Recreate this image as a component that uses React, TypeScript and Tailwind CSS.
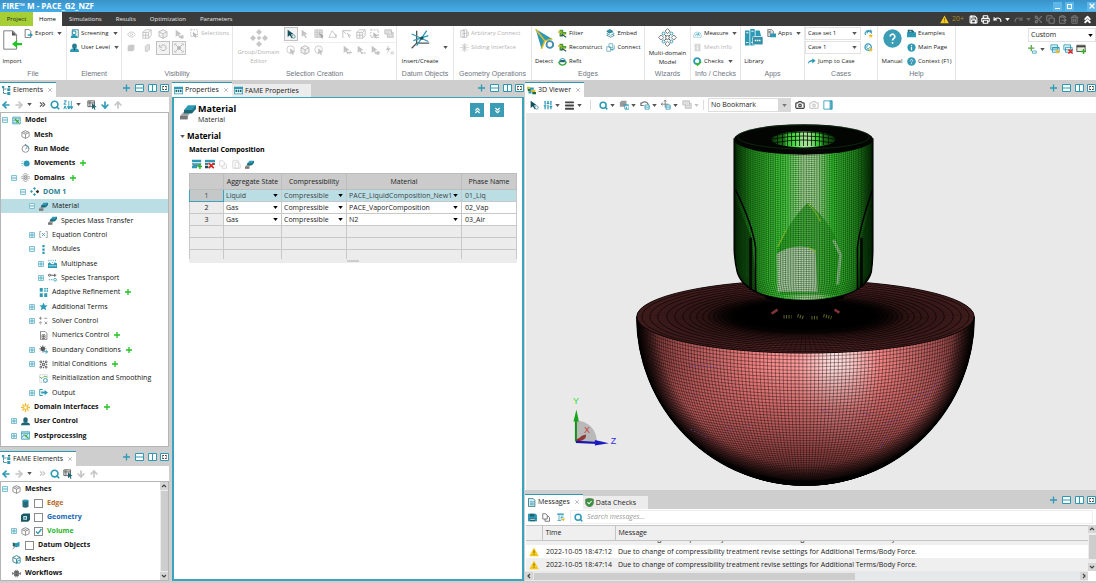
import type { ReactNode } from "react";
import {
  ArrowDown,
  ArrowLeft,
  ArrowRight,
  ArrowUp,
  Camera,
  ChevronsDown,
  ChevronsRight,
  ChevronsUp,
  ClipboardPaste,
  Copy,
  Eye,
  Menu,
  Printer,
  Redo,
  Save,
  Scissors,
  Search,
  SlidersVertical,
  Trash2,
  Undo,
  X,
} from "lucide-react";

const TEAL = "#2d9ab5";
const DARK = "#1f6573";
const OFF = "#c3c3c3";

const pointer = "M2 1l7 5-3 .5 2 4-1.500.7-1.800-3.800L2 9.500z";
const cube = "M6 .8l4.800 2.400v5.600L6 11.200 1.200 8.800V3.200zM1.200 3.200L6 5.600l4.800-2.400M6 5.600v5.600";

const glyphs: Record<string, ReactNode> = {
  cube: (
    <g fill="none" stroke="#777">
      <path d={cube} />
      <path d="M3.500 2l5 2.500M8.500 2l-5 2.500" strokeWidth=".5" />
    </g>
  ),
  cubeTeal: (
    <g fill="none" stroke="#2f7f8c" strokeWidth="1.200">
      <path d={cube} />
      <circle cx="9" cy="9" r="2" fill="#fff" stroke={TEAL} />
    </g>
  ),
  cubeOff: <path d={cube} fill="#efefef" stroke="#b5b5b5" />,
  boxOff: (
    <path d="M1 4h7v7H1zM1 4l3-3h7v7l-3 3M8 4l3-3M4.500 4v7M1 7.500h7" fill="none" stroke="#bbb" />
  ),
  solidOff: <path d="M2 4l2-2h6v6l-2 2H2z" fill="#c9c9c9" />,
  slabOff: <path d="M4 4l2-2h3v6L7 10H4z" fill="#e0e0e0" stroke="#c5c5c5" />,
  model: (
    <>
      <path d="M1 1.500h10v9H1z" fill="#d9f0ef" stroke={TEAL} />
      <path d="M1 3.500h10M1 6h5M1 8.500h5" stroke={TEAL} strokeWidth=".7" />
      <path d="M4 4l5 5M9 5l-3 4" stroke="#37a02c" strokeWidth="1.600" />
    </>
  ),
  clock: (
    <>
      <circle cx="6" cy="6.500" r="4.600" fill="#fff" stroke="#777" />
      <path d="M6 6.500l2.500-2M5 1h2" stroke="#333" />
      <path d="M6 2a4.500 4.500 0 0 1 4.500 4.500" fill="none" stroke={TEAL} strokeWidth="1.200" />
    </>
  ),
  move: (
    <>
      <circle cx="7.500" cy="6" r="4" fill={TEAL} />
      <path d="M0 6h3M1 3h2M1 9h2" stroke="#63b8cc" />
    </>
  ),
  domains: (
    <g fill="none" stroke="#777" strokeWidth=".9">
      <path d="M6 0l2 2-2 2-2-2zM6 8l2 2-2 2-2-2zM2 4l2 2-2 2-2-2zM10 4l2 2-2 2-2-2z" />
      <circle cx="6" cy="6" r="2" />
      <path d="M2 2l8 8M10 2l-8 8" strokeWidth=".5" />
    </g>
  ),
  dom: (
    <>
      <path d="M6 0l2 2-2 2-2-2zM6 8l2 2-2 2-2-2zM2 4l2 2-2 2-2-2z" fill={TEAL} />
      <path d="M10 3.500L12.500 6 10 8.500 7.500 6z" fill="#333" />
    </>
  ),
  material: (
    <>
      <path d="M0 9l3.500-4h5L6 9v2.500H0z" fill="#a3a3a3" />
      <path d="M0 9h5.500v2.500H0z" fill="#777" />
      <path d="M3 4.500L6 1h6v2.500L9 7H3z" fill={TEAL} />
      <path d="M3 4.500h6V7H3z" fill={DARK} />
      <path d="M9 4.500L12 1v2.500L9 7z" fill="#236f80" />
    </>
  ),
  equation: (
    <g fill="none" stroke="#888">
      <path d="M3 2H1v8h2M9 2h2v8H9" />
      <path d="M4 4l4 4M8 4l-4 4" stroke={TEAL} />
    </g>
  ),
  modules: (
    <path d="M4.500 0h3v3h-3zM4.500 4.500h3v3h-3zM4.500 9h3v3h-3z" fill={TEAL} />
  ),
  multiphase: (
    <>
      <path d="M0 6q2-2 4 0t4 0 4 0v6H0z" fill={TEAL} />
      <path d="M1 1v2M4 1v2M7 1v2M10 1v2M2 4v1M6 4v1M9 4v1" stroke={TEAL} />
      <path d="M1 9h10" stroke="#d5eef3" />
    </>
  ),
  transport: (
    <g fill="none" strokeWidth="1.100">
      <circle cx="2" cy="3" r="1.400" stroke="#444" />
      <path d="M3.500 3H11M9 1v4" stroke="#444" />
      <path d="M1 9h6" stroke={TEAL} strokeDasharray="2 1" />
      <circle cx="9.500" cy="9" r="1.800" stroke={TEAL} />
    </g>
  ),
  adaptive: (
    <>
      <path d="M1 0h4v5H1zM1 7h4v5H1z" fill={TEAL} />
      <path d="M7 0h2v2H7zM10 0h2v2h-2zM7 3h2v2H7zM10 3h2v2h-2zM7 7h4v5H7z" fill={TEAL} />
    </>
  ),
  star: <path d="M6 .5l1.600 3.700 4 .3-3 2.600 1 4L6 9l-3.600 2.100 1-4-3-2.600 4-.3z" fill={TEAL} />,
  solver: (
    <path
      d="M0 3h4M2 1v4M7 3h4M0 9h4M1.500 7.500h1M1.500 10.800h1M7.500 7.500l3.500 3.500M11 7.500L7.500 11"
      stroke="#777"
      fill="none"
    />
  ),
  numerics: (
    <g fill="none" stroke="#666">
      <path d="M2 .5h6l2.500 2.500v8.500H2z" />
      <path d="M4 5h4v5H4zM4 7.500h4M6 5v5" />
    </g>
  ),
  boundary: (
    <>
      <circle cx="5" cy="5" r="3" fill="#444" />
      <path d="M5 0v10M0 5h10M1.500 1.500l7 7M8.500 1.500l-7 7" stroke="#666" strokeWidth=".8" />
      <path d="M5 9h6M9 7l2.500 2L9 11.500" stroke={TEAL} strokeWidth="1.300" fill="none" />
    </>
  ),
  initial: (
    <g fill="none" stroke="#333">
      <circle cx="2.500" cy="2.500" r="1.300" />
      <circle cx="9.500" cy="2.500" r="1.300" />
      <circle cx="6" cy="6" r="1.300" />
      <circle cx="2.500" cy="9.500" r="1.300" />
      <circle cx="9.500" cy="9.500" r="1.300" />
      <path d="M6 1v2M6 9v2M1 6h2M9 6h2M3.500 3.500l1.500 1.500M8.500 3.500L7 5M3.500 8.500L5 7M8.500 8.500L7 7" />
    </g>
  ),
  smoothing: (
    <g fill="none">
      <path d="M1 1h10v10H1z" stroke="#bbb" strokeDasharray="2 1" />
      <path d="M1 4l3 2 3-3 4 1" stroke="#37a02c" />
      <circle cx="8.500" cy="8.500" r="2.500" stroke={TEAL} strokeWidth="1.200" />
    </g>
  ),
  output: (
    <>
      <path d="M5 2H1v8h4" fill="none" stroke={TEAL} strokeWidth="1.300" />
      <path d="M3 4.800h4.500V2.500L12 6 7.500 9.500V7.200H3z" fill={TEAL} />
    </>
  ),
  sun: (
    <>
      <path d="M6 0v12M0 6h12M1.800 1.800l8.400 8.400M10.200 1.800l-8.400 8.400" stroke="#efb929" strokeWidth="1.700" />
      <circle cx="6" cy="6" r="2.300" fill="#fff" stroke="#efb929" />
    </>
  ),
  user: (
    <>
      <ellipse cx="6" cy="4" rx="3" ry="3.600" fill="#216474" />
      <path d="M0 11c0-3 2-4 6-4s6 1 6 4z" fill="#216474" />
    </>
  ),
  people: (
    <>
      <ellipse cx="6" cy="4" rx="3.200" ry="3.500" fill="#247f94" />
      <path d="M0 12c0-4 2-5 6-5s6 1 6 5z" fill={TEAL} />
      <path d="M5 7l1 4 1-4z" fill="#164d58" />
    </>
  ),
  screening: (
    <>
      <path d="M3 1h8v10H3z" fill="#fff" stroke={DARK} />
      <circle cx="5.500" cy="5" r="2.500" fill="#fff" stroke={TEAL} strokeWidth="1.400" />
      <path d="M1 12c0-3 1-4 4.500-4S10 9 10 12z" fill={TEAL} />
    </>
  ),
  post: (
    <>
      <path d="M.5 1h11v10H.5z" fill="#cdeaf0" stroke={TEAL} />
      <path d="M.5 3h11M1 9l3-4 2 2 3-3" stroke={TEAL} fill="none" />
      <path d="M5 5l5 5" stroke="#4cae3c" strokeWidth="1.600" />
    </>
  ),
  edge: (
    <>
      <path d="M2 2h8v8c0 2-8 2-8 0z" fill="#27606c" />
      <ellipse cx="6" cy="2.200" rx="4" ry="1.500" fill={TEAL} />
      <path d="M4 4v7M8 4v7" stroke={TEAL} strokeWidth=".7" />
    </>
  ),
  geometry: (
    <>
      <path d="M0 3l3-2.500h9V9l-2.500 2.500H0z" fill="#1c5866" />
      <path d="M3 4h5v5H3z" fill="#bfe2ea" />
      <path d="M4.500 5.500h2v2h-2z" fill="#1c5866" />
    </>
  ),
  datum: (
    <>
      <path d="M1 2l4 1v5L1 7z" fill={DARK} />
      <path d="M5 3l5-2v6L5 8.500z" fill={TEAL} />
      <path d="M1 11l3-4" stroke="#8a8a8a" strokeWidth="1.300" />
    </>
  ),
  workflow: (
    <>
      <path d="M3 2.500h6v7H3z" fill="#555" />
      <path d="M0 6h12M1 4v4M11 4v4M5 1v10M7 1v10" stroke="#777" strokeWidth="1.200" />
    </>
  ),
  tree: (
    <>
      <path d="M2 1v9h4M2 4h4" stroke={DARK} fill="none" strokeDasharray="1.500 .8" strokeWidth="1.300" />
      <path d="M0 0h3v3H0zM7 3h4v3.500H7zM7 8h4v4H7z" fill={TEAL} />
      <path d="M8 0h3v2H8z" fill={DARK} />
    </>
  ),
  props: (
    <>
      <path d="M0 1h12v10H0z" fill={TEAL} />
      <path d="M1 4h10v6H1z" fill="#e6f5f8" />
      <path d="M2 5h2v3H2zM5 5h2v3H5zM8 5h2v3H8z" fill={DARK} />
    </>
  ),
  viewer: (
    <>
      <path d="M0 1h4v3H0zM5 5h6v3H5z" fill="#d6bf2d" />
      <path d="M1 4h4v3H1zM7 8h5v3H7z" fill="#1e6d3f" />
      <path d="M4 2h5v3H4zM2 7h4v3H2z" fill={TEAL} />
    </>
  ),
  doc: (
    <g stroke={DARK} fill="#d3ebf1">
      <path d="M2 .5h6L10.500 3v8.500H2z" />
      <path d="M4 5h5M4 7h5M4 9h5" stroke={TEAL} />
    </g>
  ),
  shield: (
    <>
      <path d="M6 0l5.500 1.500v4C11.500 9 9 11 6 12 3 11 .5 9 .5 5.500v-4z" fill="#38933d" stroke="#777" strokeWidth=".7" />
      <path d="M3.300 5.500l2 2.200L8.800 4" stroke="#fff" strokeWidth="1.400" fill="none" />
    </>
  ),
  warn: (
    <>
      <path d="M6 .5l5.800 10.500H.2z" fill="#f7c81c" />
      <path d="M6 4v3.500M6 8.500v1.200" stroke="#6f5a09" />
    </>
  ),
  import: (
    <>
      <path d="M1.500 1h5l2 2v8h-7z" fill="#fff" stroke="#777" strokeWidth=".5" />
      <path d="M6 1v2.500h2.500z" fill="#555" />
      <path d="M11.500 7.600H8.800V6L6 8.200l2.800 2.200V8.800h2.700z" fill="#22c322" />
    </>
  ),
  export: (
    <>
      <path d="M1.500.5h5L9 3v8.500H1.500z" fill="#fff" stroke="#555" />
      <path d="M5 7h3.500V5L12 8l-3.500 3V9H5z" fill={TEAL} />
    </>
  ),
  select: (
    <>
      <path d={pointer} fill="#15505c" />
      <circle cx="9" cy="9" r="2" fill="none" stroke="#4e8d97" />
    </>
  ),
  arrowOff: <path d={pointer} fill={OFF} />,
  arrowDot: (
    <g fill={OFF}>
      <path d={pointer} />
      <circle cx="9.500" cy="9.500" r="2.200" />
    </g>
  ),
  arrowPlus: (
    <g fill={OFF}>
      <path d={pointer} />
      <path d="M7 8.500h2v-2h1v2h2v1h-2v2H9v-2H7z" />
    </g>
  ),
  arrowMinus: (
    <g fill={OFF}>
      <path d={pointer} />
      <path d="M7 9h5v1.200H7z" />
    </g>
  ),
  gridOff: (
    <>
      <path d="M1 1h9v9H1zM1 4h9M1 7h9M4 1v9M7 1v9" stroke="#c5c5c5" fill="#e2e2e2" />
      <path d="M6 5l5 4-2 .5 1 2" stroke="#999" fill="#999" />
    </>
  ),
  angleOff: (
    <g fill="none" stroke={OFF}>
      <path d="M5 2L1 10h9M5 2l2 3" />
      <path d="M7 5l4 3-2 .5 1 2" fill={OFF} />
    </g>
  ),
  cornerOff: (
    <g fill="none" stroke={OFF} strokeWidth="1.200">
      <path d="M1 11V2h10M1 2l4 4" />
      <path d="M6 5l4 3-2 .5 1 2" fill={OFF} />
    </g>
  ),
  ringOff: (
    <>
      <circle cx="5.500" cy="5.500" r="4.500" fill="none" stroke={OFF} />
      <path d="M5 4l6 4.500-2.500.5 1 2.500-1.500.5-1-2.500L5 11z" fill={OFF} />
    </>
  ),
  dashOff: (
    <>
      <path d="M1 1h9v9H1z" fill="none" stroke={OFF} strokeDasharray="2 1.500" strokeWidth="1.400" />
      <path d="M4 4l6 4-2.500.5 1 2.500-1.500.5-1-2.500L4 10z" fill="#bcbcbc" />
    </>
  ),
  stackOff: (
    <path d="M1 1h8v5H1zM4 6v4h7V4H9" fill="#dedede" stroke="#bdbdbd" />
  ),
  flashOff: (
    <>
      <path d="M6 0L2 6h3l-2 5 5-7H5z" fill={OFF} />
      <circle cx="10" cy="9.500" r="1.500" fill="none" stroke={OFF} />
    </>
  ),
  rotateOff: (
    <path d="M3 7a3.500 3.500 0 1 0 1-4M2 2v3h3" fill="none" stroke="#b5b5b5" strokeWidth="1.200" />
  ),
  fitOff: (
    <g fill="none" stroke="#b5b5b5">
      <path d="M1 3V1h2M9 1h2v2M11 9v2H9M3 11H1V9M2 2l8 8M10 2l-8 8" />
      <path d="M4.500 4.500h3v3h-3z" fill="#b5b5b5" />
    </g>
  ),
  diamonds: (
    <path
      d="M6 0l2 2-2 2-2-2zM6 8l2 2-2 2-2-2zM2 4l2 2-2 2-2-2zM10 4l2 2-2 2-2-2zM6 4.500l1.500 1.500L6 7.500 4.500 6z"
      fill="#c6c6c6"
    />
  ),
  wizard: (
    <g fill="none" strokeWidth=".6">
      <g stroke="#6f6f6f">
        <path d="M6 .4L7.600 2 6 3.600 4.400 2zM6 8.400L7.600 10 6 11.600 4.400 10zM2 4.400L3.600 6 2 7.600.4 6zM10 4.400L11.600 6 10 7.600 8.400 6z" />
        <circle cx="6" cy="6" r="1.200" />
      </g>
      <g stroke={TEAL}>
        <circle cx="3.500" cy="3.500" r=".9" />
        <circle cx="8.500" cy="3.500" r=".9" />
        <circle cx="3.500" cy="8.500" r=".9" />
        <circle cx="8.500" cy="8.500" r=".9" />
      </g>
      <path d="M4.200 4.200l1 1M7.800 4.200l-1 1M4.200 7.800l1-1M7.800 7.800l-1-1" stroke="#555" />
    </g>
  ),
  insert: (
    <g fill="none" strokeWidth=".8">
      <path d="M4 1v7.500L1 11.500M4 8.500h7.500" stroke="#555" />
      <path d="M1 3l10 4.500M10 1L4 10M2 7l9-3" stroke={TEAL} />
      <circle cx="7" cy="5.500" r="1" fill="#1b4b55" />
    </g>
  ),
  detect: (
    <>
      <path d="M1 0l10 6-4.500 1.200L4.500 12z" fill={TEAL} />
      <path d="M1 0l5.500 7.200L11 6M6.500 7.200L4.500 12" stroke="#e3bd21" fill="none" strokeWidth=".9" />
      <circle cx="9.500" cy="9.300" r="2" fill="#fff" stroke="#3f8fb0" strokeWidth="1.100" />
    </>
  ),
  filter: (
    <>
      <path d="M2 1h5v3h4v3H6v3H2z" fill="#3f9f3a" />
      <path d="M0 3h5v2H0zM4 6h6v2H4z" fill="#e0b81d" />
      <path d="M5 7l6 4M3 9h4" stroke="#1f6573" strokeWidth="1.600" />
    </>
  ),
  refit: (
    <>
      <path d="M2 6a4 4 0 0 1 8 0" fill="none" stroke={TEAL} strokeWidth="1.300" />
      <path d="M1 7c3-2 7-2 10 0-2 5-8 5-10 0z" fill="none" stroke="#3aa23a" strokeWidth="1.600" />
      <path d="M3 4h6v3H3z" fill={DARK} />
    </>
  ),
  layers: (
    <g fill="#fff" stroke={DARK} strokeWidth=".9">
      <path d="M6 6l5 2.500-5 2.500-5-2.500z" />
      <path d="M6 3.500l5 2.500-5 2.500L1 6z" stroke={TEAL} />
      <path d="M5 .5L9 3 5 5.500 1 3z" fill={TEAL} />
    </g>
  ),
  connect: (
    <g fill="none" stroke="#5b9fb0">
      <path d="M4 1h5v5H4zM1 5h5v6H1zM6 8h5V3" />
      <path d="M7 9h3" stroke={TEAL} strokeWidth="1.600" />
    </g>
  ),
  connectOff: (
    <path d="M4 1h5v10H4zM1 2h5v9H1zM8 4h3v5H8M4 6h5" fill="none" stroke="#b9b9b9" />
  ),
  burstOff: (
    <path d="M6 0v12M0 6h12M2 2l8 8M10 2l-8 8M4 1l4 10M8 1L4 11" stroke={OFF} strokeWidth=".8" />
  ),
  measure: (
    <g fill="none">
      <path d="M1 9a5 5 0 0 1 10 0v2H1z" stroke="#8ec7d5" />
      <path d="M3.500 9a2.500 2.500 0 0 1 5 0M6 9l2-4" stroke={TEAL} />
    </g>
  ),
  infoOff: (
    <>
      <path d="M2 1h8v10H2z" fill="#d7d7d7" />
      <path d="M6 3v1.500M6 5.500V9" stroke="#fff" strokeWidth="1.500" />
    </>
  ),
  checks: (
    <>
      <circle cx="5.500" cy="5.500" r="4" fill="#fff" stroke={TEAL} strokeWidth="2.400" />
      <path d="M4 8l2 3 5-5" stroke="#35bb2b" strokeWidth="2" fill="none" />
    </>
  ),
  library: (
    <>
      <path d="M0 1h3v10H0zM3.500 0h3v11h-3zM7 1h2.800l1 4H7z" fill={TEAL} />
      <path d="M.7 2.500h1.600M4.200 1.500h1.600M.7 9h1.600M4.200 9h1.600" stroke="#fff" strokeWidth=".6" />
      <rect x="5" y="5" width="7" height="5.500" rx=".8" fill="#358fa8" stroke="#fff" strokeWidth=".4" />
      <path d="M6.500 7.700h4" stroke="#fff" strokeWidth="1" strokeDasharray="1 .4" />
    </>
  ),
  apps: (
    <>
      <path d="M1 .5h5L8.500 3v7H1z" fill="#ddd" stroke="#666" />
      <path d="M4 6h8v5H4z" fill={TEAL} />
      <path d="M2 3.500h3M2 5h3" stroke="#666" />
    </>
  ),
  caseNew: (
    <>
      <path d="M2 8a4 4 0 0 1 6-5M4 6a3 3 0 0 1 6 0M8 1l2 2-2.500 1.500" fill="none" stroke={TEAL} strokeWidth="1.400" />
      <path d="M9 6l.9 1.900 2.100.2-1.600 1.400.5 2.100L9 10.500l-1.900 1.100.5-2.100L6 8.100l2.100-.2z" fill="#f0bb22" />
    </>
  ),
  caseSet: (
    <>
      <circle cx="5.500" cy="5.500" r="4.200" fill="none" stroke={TEAL} strokeWidth="1.700" />
      <path d="M5.500 3.500a2 2 0 1 0 2 2" fill="none" stroke={TEAL} />
      <path d="M9 6l.9 1.900 2.100.2-1.600 1.400.5 2.100L9 10.500l-1.900 1.100.5-2.100L6 8.100l2.100-.2z" fill="#f0bb22" />
    </>
  ),
  jump: <path d="M1 10c0-4 2-6 6-6V1.500L11.500 5 7 8.500V6C4 6 2.500 7 1 10z" fill={TEAL} />,
  help: (
    <>
      <circle cx="6" cy="6" r="5.800" fill="#3b9cb6" />
      <path d="M4.500 4.700a1.500 1.500 0 1 1 2.200 1.400c-.5.200-.7.500-.7 1.100M6 8.200v1.100" stroke="#fff" strokeWidth="1" fill="none" />
    </>
  ),
  info: (
    <>
      <circle cx="6" cy="6" r="5.500" fill={TEAL} />
      <path d="M6 2.500V4M6 5v4.500" stroke="#fff" strokeWidth="1.600" />
    </>
  ),
  folder: (
    <>
      <path d="M1 1h6l3 3v4H1z" fill={DARK} />
      <path d="M0 4.500h12V11H0z" fill={TEAL} />
      <path d="M3 3h3" stroke="#fff" />
    </>
  ),
  addView: (
    <>
      <path d="M3.500 0h1.700v3.300H8.500V5H5.200v3.300H3.500V5H0V3.300h3.500z" fill="#5aa545" />
      <path d="M6 8h5v3H6z" fill="#fff" stroke={TEAL} />
    </>
  ),
  viewNew: (
    <>
      <path d="M1 1h8v6H1zM3 4h8v6H3z" fill="#e6f5f8" stroke={TEAL} />
      <path d="M3 4.500h8" stroke={TEAL} strokeWidth="1.600" />
      <path d="M9 6l.9 1.900 2.100.2-1.600 1.400.5 2.100L9 10.500l-1.900 1.100.5-2.100L6 8.100l2.100-.2z" fill="#f0bb22" />
    </>
  ),
  viewDel: (
    <>
      <path d="M1 1h8v6H1zM3 4h8v6H3z" fill="#e6f5f8" stroke={TEAL} />
      <path d="M6.500 6.500l5 5M11.500 6.500l-5 5" stroke="#d22" strokeWidth="1.700" />
    </>
  ),
  viewAdd: (
    <>
      <path d="M1 1.500h10V9H1z" fill="#e9eedd" stroke="#444" />
      <path d="M1 3h10" stroke="#444" strokeWidth="2" />
      <path d="M9 6v6M6 9h6" stroke="#3aa82c" strokeWidth="1.700" />
    </>
  ),
  rowAdd: (
    <>
      <path d="M0 1h11v3H0zM0 5h11v2H0zM0 8h6v3H0z" fill={TEAL} />
      <path d="M1 7.500h9" stroke="#234f58" />
      <path d="M9.500 6v6M6.500 9h6" stroke="#2bb32b" strokeWidth="1.800" />
    </>
  ),
  rowDel: (
    <>
      <path d="M0 1h12v3H0z" fill={TEAL} />
      <path d="M0 5h4v2H0zM0 8h4v3H0zM9 5h3v2H9z" fill="#234f58" />
      <path d="M4.500 5l6 6M10.500 5l-6 6" stroke="#d8261f" strokeWidth="2" />
    </>
  ),
  copyOff: <path d="M1 1h4l2 2v5H1zM4 8v3h6V6L8 4H7" fill="none" stroke="#cfcfcf" />,
  pasteOff: <path d="M1 1h8v10H1zM4 3h4l3 3v5H4z" fill="#fff" stroke="#cfcfcf" />,
  copy: <path d="M1 1h4l2 2v5H1zM4 8v3h6V6L8 4H7" fill="none" stroke="#555" />,
  save: (
    <>
      <path d="M0 1h10l2 2v8H0z" fill={TEAL} />
      <path d="M2.500 1h6v3.500h-6zM2.500 7h7v4h-7z" fill="#216474" />
      <path d="M3 8.500h6" stroke="#fff" />
    </>
  ),
  log: (
    <>
      <path d="M2 1h8v1H2zM4 2v8M2 10h5M6 4h4M6 6h4M6 8h2" stroke={TEAL} fill="none" />
      <path d="M7 8l5-1-2 4z" fill="#e0b81d" />
    </>
  ),
  pick: (
    <>
      <path d="M1 1h8v7H1zM1 3.500h8M3.500 1v7" fill="#e8e8e8" stroke="#555" />
      <path d="M6 4l5.500 4.500-2.300.3 1 2.500-1.300.4-1-2.400L6 11z" fill={DARK} />
    </>
  ),
  sort: (
    <>
      <path d="M1 1h3L1 5h3M1 11l1.500-4L4 11" stroke={TEAL} fill="none" strokeWidth="1.200" />
      <path d="M7 1v8M5.500 8L7 11l1.500-3zM10 1v8M8.700 8l1.500 3 1.500-3z" stroke={TEAL} fill={TEAL} />
    </>
  ),
  solid: (
    <>
      <path d="M1 3l2-2h6v7H1z" fill="#9a9a9a" />
      <path d="M7 6h5v5H7z" fill="#fff" stroke={TEAL} />
      <path d="M5 6h6M9 8v3" stroke={TEAL} />
    </>
  ),
  rotate: (
    <>
      <path d="M1 6c1-5 8-5 9 0M1 3v3.500h3.500" fill="none" stroke="#777" strokeWidth="1.300" />
      <path d="M6 6h5v5H6zM6 8.500h5" fill="#fff" stroke={TEAL} />
    </>
  ),
  pan: (
    <>
      <path d="M5 0v9M0 5h9M3.500 2L5 0l1.500 2M2 3.500L0 5l2 1.500" fill="none" stroke="#777" />
      <path d="M6 6h5v5H6zM6 8.500h5" fill="#fff" stroke={TEAL} />
    </>
  ),
  sideList: (
    <>
      <path d="M1 1h10v10H1z" fill="#fff" stroke={TEAL} />
      <path d="M9.500 1v10" stroke={TEAL} strokeWidth="3" />
      <path d="M9.500 3v1M9.500 5.500v1M9.500 8v1" stroke="#fff" />
    </>
  ),
};

function Glyph({ name, className = "size-[10px]" }: { name: string; className?: string }) {
  return (
    <svg viewBox="0 0 12 12" className={`shrink-0 ${className}`} aria-hidden="true">
      {glyphs[name]}
    </svg>
  );
}

function Caret({ className = "text-[#555]" }: { className?: string }) {
  return (
    <svg viewBox="0 0 6 4" className={`h-[3px] w-[5px] shrink-0 ${className}`} aria-hidden="true">
      <path d="M0 0h6L3 4z" fill="currentColor" />
    </svg>
  );
}

function PlusMark({ className = "text-[#22c322]" }: { className?: string }) {
  return (
    <svg viewBox="0 0 6 6" className={`size-[6px] shrink-0 ${className}`} aria-hidden="true">
      <path d="M3 0v6M0 3h6" stroke="currentColor" strokeWidth="1.300" />
    </svg>
  );
}

/* ---------- ribbon ---------- */

function Group({ label, className, children }: { label: string; className: string; children?: ReactNode }) {
  return (
    <section className={`flex shrink-0 flex-col border-r border-[#e6e6e6] ${className}`}>
      <div className="flex h-[42px]">{children}</div>
      <h2 className="text-center font-['Liberation_Sans',sans-serif] text-[7px] leading-[12px] text-[#6f7682]">
        {label}
      </h2>
    </section>
  );
}

function Cmd({ icon, text, caret, off }: { icon: string; text: string; caret?: boolean; off?: boolean }) {
  return (
    <button className={`flex h-[14px] items-center gap-[2px] whitespace-nowrap ${off ? "text-[#b4b4b4]" : "text-[#222]"}`}>
      <Glyph name={icon} className="size-[9px]" />
      {text}
      {caret && <Caret className={off ? "text-[#c3c3c3]" : "ml-[2px] text-[#555]"} />}
    </button>
  );
}

function BigCmd({ icon, text, className, iconClass = "size-5" }: { icon: string; text: string; className: string; iconClass?: string }) {
  return (
    <button className={`flex shrink-0 flex-col items-center justify-between pt-[3px] leading-[14px] ${className}`}>
      <Glyph name={icon} className={iconClass} />
      <span className="whitespace-nowrap">{text}</span>
    </button>
  );
}

function IconCell({ icon, boxed }: { icon: string; boxed?: boolean }) {
  return (
    <button
      aria-label={icon}
      className={`flex h-[14px] w-[14px] items-center justify-center ${boxed ? "border border-[#c2c2c2] bg-[#f3f3f3]" : ""}`}
    >
      {icon && <Glyph name={icon} />}
    </button>
  );
}

function CaseSelect({ label, value }: { label: string; value: string }) {
  return (
    <label className="flex h-[14px] items-center gap-[3px]">
      <span className="relative flex items-center">
        <select aria-label={label} className="h-[13px] w-[56px] appearance-none border border-[#e2e2e2] bg-white pl-[2px]">
          <option>{value}</option>
        </select>
        <Caret className="pointer-events-none absolute right-[4px] text-[#555]" />
      </span>
      <Glyph name={label === "Case set" ? "caseNew" : "caseSet"} className="size-[9px]" />
    </label>
  );
}

const tabs = ["Simulations", "Results", "Optimization", "Parameters"];
const selectionIcons = [
  ["arrowOff", "gridOff", "angleOff", "cornerOff", "boxOff", "dashOff", "stackOff"],
  ["ringOff", "cubeOff", "ringOff", "", "arrowPlus", "arrowMinus", "arrowDot", "flashOff"],
];

function TitleBar() {
  return (
    <header className="flex h-3 shrink-0 items-center justify-between bg-linear-to-b from-[#3a93c9] to-[#46aee8] pl-[2px]">
      <h1 className="text-[8px] leading-[12px] font-bold text-white">FIRE™ M - PACE_G2_NZF</h1>
      <div className="flex items-center gap-[3px]">
        <button aria-label="Minimize" className="flex size-[9px] items-end justify-center bg-[#5db7e8] p-[2px]">
          <span className="h-[1px] w-full bg-white" />
        </button>
        <button aria-label="Restore" className="flex size-[9px] items-center justify-center bg-[#5db7e8]">
          <span className="size-[5px] border border-white" />
        </button>
        <button aria-label="Close" className="ml-[10px] flex size-[9px] items-center justify-center bg-[#5db7e8] text-white">
          <X size={8} strokeWidth={4} />
        </button>
      </div>
    </header>
  );
}

function TabBar() {
  return (
    <nav className="flex h-[14px] shrink-0 items-stretch bg-[#3b3b3b] text-[6px] text-[#e8e8e8]">
      <button className="w-[33px] bg-[#a6cf36] text-[#222]">Project</button>
      <button className="w-[29px] bg-white font-medium text-black">Home</button>
      {tabs.map((t) => (
        <button key={t} className="px-[7px]">
          {t}
        </button>
      ))}
      <div className="ml-auto flex items-center gap-[3px] pr-[3px] text-white">
        <Glyph name="warn" className="size-[9px]" />
        <span className="mr-[2px] text-[7px] text-[#a98c1d]">20+</span>
        <Save size={9} strokeWidth={3} />
        <Printer size={9} strokeWidth={3} />
        <Undo size={9} strokeWidth={3} />
        <Caret className="mr-[1px] text-white" />
        <Redo size={9} strokeWidth={3} className="text-[#6f6f6f]" />
        <Caret className="text-[#6f6f6f]" />
        <Scissors size={9} strokeWidth={3} className="text-[#777]" />
        <Copy size={9} strokeWidth={3} className="text-[#777]" />
        <ClipboardPaste size={9} strokeWidth={3} className="text-[#777]" />
        <Trash2 size={9} strokeWidth={3} className="text-[#777]" />
        <ChevronsUp size={11} strokeWidth={4} />
      </div>
    </nav>
  );
}

function Ribbon() {
  return (
    <div className="flex h-[54px] shrink-0 overflow-hidden bg-white text-[6px] text-[#222]">
      <Group label="File" className="w-[67px]">
        <BigCmd icon="import" text="Import" className="w-[24px]" iconClass="size-[22px]" />
        <Cmd icon="export" text="Export" caret />
      </Group>
      <Group label="Element" className="w-[55px]">
        <div className="pl-[3px]">
          <Cmd icon="screening" text="Screening" caret />
          <Cmd icon="people" text="User Level" caret />
        </div>
      </Group>
      <Group label="Visibility" className="w-[111px]">
        <div className="flex gap-[2px] pt-[1px] pl-[2px]">
          <div className="flex flex-col">
            <button aria-label="Show" className="flex size-[14px] items-center justify-center text-[#c3c3c3]">
              <Eye size={9} />
            </button>
            <IconCell icon="solidOff" />
          </div>
          <div>
            <IconCell icon="boxOff" />
            <IconCell icon="slabOff" />
          </div>
          <div>
            <IconCell icon="cubeOff" />
            <IconCell icon="rotateOff" boxed />
          </div>
          <div>
            <IconCell icon="arrowDot" />
            <IconCell icon="fitOff" boxed />
          </div>
        </div>
        <div className="pl-[4px]">
          <Cmd icon="dashOff" text="Selections" off />
        </div>
      </Group>
      <Group label="Selection Creation" className="w-[164px]">
        <button className="flex w-[51px] shrink-0 flex-col items-center pt-[3px] text-[#b4b4b4]">
          <Glyph name="diamonds" className="size-[18px]" />
          <span className="pt-[1px] leading-[9px]">
            Group/Domain
            <br />
            Editor
          </span>
        </button>
        <div className="flex flex-col gap-[1px] pt-[1px]">
          <div className="flex">
            <IconCell icon="select" boxed />
            {selectionIcons[0].map((n, i) => (
              <IconCell key={i} icon={n} />
            ))}
          </div>
          <div className="flex border-t border-[#eee]">
            {selectionIcons[1].map((n, i) => (
              <IconCell key={i} icon={n} />
            ))}
          </div>
        </div>
      </Group>
      <Group label="Datum Objects" className="w-[57px]">
        <BigCmd icon="insert" text="Insert/Create" className="w-[46px]" />
        <span className="pt-5">
          <Caret />
        </span>
      </Group>
      <Group label="Geometry Operations" className="w-[78px]">
        <div className="pl-[6px]">
          <Cmd icon="connectOff" text="Arbitrary Connect" off />
          <Cmd icon="burstOff" text="Sliding Interface" off />
        </div>
      </Group>
      <Group label="Edges" className="w-[113px]">
        <BigCmd icon="detect" text="Detect" className="w-[24px]" />
        <div className="pl-[2px]">
          <Cmd icon="filter" text="Filter" />
          <Cmd icon="filter" text="Reconstruct" />
          <Cmd icon="refit" text="Refit" />
        </div>
        <div className="pl-[4px]">
          <Cmd icon="layers" text="Embed" />
          <Cmd icon="connect" text="Connect" />
        </div>
      </Group>
      <Group label="Wizards" className="w-[46px]">
        <button className="flex w-full flex-col items-center pt-[2px] leading-[9px]">
          <Glyph name="wizard" className="size-[19px]" />
          <span className="pt-[2px] whitespace-nowrap">
            Multi-domain
            <br />
            Model
          </span>
        </button>
      </Group>
      <Group label="Info / Checks" className="w-[50px]">
        <div className="pl-[2px]">
          <Cmd icon="measure" text="Measure" caret />
          <Cmd icon="infoOff" text="Mesh Info" off />
          <Cmd icon="checks" text="Checks" caret />
        </div>
      </Group>
      <Group label="Apps" className="w-[64px]">
        <BigCmd icon="library" text="Library" className="w-[26px]" iconClass="size-[18px]" />
        <Cmd icon="apps" text="Apps" caret />
      </Group>
      <Group label="Cases" className="w-[73px]">
        <div>
          <CaseSelect label="Case set" value="Case set 1" />
          <CaseSelect label="Case" value="Case 1" />
          <div className="pl-[2px]">
            <Cmd icon="jump" text="Jump to Case" />
          </div>
        </div>
      </Group>
      <Group label="Help" className="w-[78px]">
        <BigCmd icon="help" text="Manual" className="w-[28px]" iconClass="size-[19px]" />
        <div className="pl-[1px]">
          <Cmd icon="folder" text="Examples" />
          <Cmd icon="info" text="Main Page" />
          <Cmd icon="help" text="Context (F1)" />
        </div>
      </Group>
      <div className="ml-auto flex w-[68px] flex-col gap-[2px] pt-[2px]">
        <span className="relative flex items-center border border-[#e2e2e2]">
          <select aria-label="Layout" className="h-[12px] w-full appearance-none bg-white pl-[2px] text-[7px]">
            <option>Custom</option>
          </select>
          <Caret className="pointer-events-none absolute right-[2px] text-black" />
        </span>
        <div className="flex items-center gap-[3px]">
          <Glyph name="addView" className="size-[9px]" />
          <Caret className="mr-[2px] text-[#555]" />
          <Glyph name="viewNew" />
          <Glyph name="viewDel" />
          <Glyph name="viewAdd" />
        </div>
      </div>
    </div>
  );
}

/* ---------- panel chrome ---------- */

function PanelTab({ icon, text, active }: { icon: string; text: string; active?: boolean }) {
  return (
    <button
      className={`flex items-center gap-[2px] pl-[2px] whitespace-nowrap ${
        active ? "border-t border-[#2d9ab5] bg-white pr-[3px]" : "mt-[2px] bg-[#ececec] pr-3"
      }`}
    >
      <Glyph name={icon} className="size-[9px]" />
      {text}
      {active && <X size={6} className="ml-[2px] text-[#777]" />}
    </button>
  );
}

function PanelHead({ children }: { children: ReactNode }) {
  return (
    <div className="flex h-[15px] shrink-0 items-stretch bg-[#cecece]">
      {children}
      <svg viewBox="0 0 46 10" className="mt-[1px] ml-auto h-[10px] w-[46px]" fill="none" stroke={TEAL} aria-hidden="true">
        <path d="M0 5h7M3.500 1.500v7" strokeWidth="1.300" />
        <path d="M12.500 1.500h8v7h-8zM25.500 1.500h8v7h-8zM37.500 1.500h8v7h-8z" fill="#fff" />
        <path d="M12.500 5h8M29.500 1.500v7" />
        <path d="M39.500 4.500v-1h1.500M43.500 4.500v-1H42M39.500 5.500v1h1.500M43.500 5.500v1H42" stroke="#444" />
      </svg>
    </div>
  );
}

function TreeTools({ full }: { full?: boolean }) {
  const off = "text-[#c5c5c5]";
  const on = "text-[#2d9ab5]";
  return (
    <div className="flex h-[15px] shrink-0 items-center gap-[3px] bg-white pl-[1px]">
      <ArrowLeft size={10} strokeWidth={4} className={on} />
      <ArrowRight size={10} strokeWidth={4} className={off} />
      <Caret />
      <ChevronsRight size={9} className={full ? "ml-[3px] text-[#555]" : "ml-[3px] text-[#c5c5c5]"} strokeWidth={3} />
      <Search size={10} strokeWidth={4} className={on} />
      {full && <Glyph name="sort" />}
      {full && <Caret className="mr-[3px] text-[#555]" />}
      <Glyph name="pick" />
      <ArrowDown size={10} strokeWidth={4} className={full ? on : off} />
      <ArrowUp size={10} strokeWidth={4} className={off} />
    </div>
  );
}

/* ---------- trees ---------- */

type Node = {
  text: string;
  level: number;
  icon: string;
  box?: "+" | "-";
  bold?: boolean;
  add?: boolean;
  selected?: boolean;
  check?: boolean;
  color?: string;
};

const elements: Node[] = [
  { text: "Model", level: 0, icon: "model", box: "-", bold: true },
  { text: "Mesh", level: 1, icon: "cube", bold: true },
  { text: "Run Mode", level: 1, icon: "clock", bold: true },
  { text: "Movements", level: 1, icon: "move", bold: true, add: true },
  { text: "Domains", level: 1, icon: "domains", box: "-", bold: true, add: true },
  { text: "DOM 1", level: 2, icon: "dom", box: "-", bold: true, color: "text-[#2b7f92]" },
  { text: "Material", level: 3, icon: "material", box: "-", selected: true },
  { text: "Species Mass Transfer", level: 4, icon: "material" },
  { text: "Equation Control", level: 3, icon: "equation", box: "+" },
  { text: "Modules", level: 3, icon: "modules", box: "-" },
  { text: "Multiphase", level: 4, icon: "multiphase", box: "+" },
  { text: "Species Transport", level: 4, icon: "transport", box: "+" },
  { text: "Adaptive Refinement", level: 3, icon: "adaptive", add: true },
  { text: "Additional Terms", level: 3, icon: "star", box: "+" },
  { text: "Solver Control", level: 3, icon: "solver", box: "+" },
  { text: "Numerics Control", level: 3, icon: "numerics", add: true },
  { text: "Boundary Conditions", level: 3, icon: "boundary", box: "+", add: true },
  { text: "Initial Conditions", level: 3, icon: "initial", box: "+", add: true },
  { text: "Reinitialization and Smoothing", level: 3, icon: "smoothing" },
  { text: "Output", level: 3, icon: "output", box: "+" },
  { text: "Domain Interfaces", level: 1, icon: "sun", bold: true, add: true },
  { text: "User Control", level: 1, icon: "user", box: "+", bold: true },
  { text: "Postprocessing", level: 1, icon: "post", box: "+", bold: true },
];

const fame: Node[] = [
  { text: "Meshes", level: 0, icon: "cube", box: "-", bold: true },
  { text: "Edge", level: 1, icon: "edge", bold: true, check: false, color: "text-[#b8692b]" },
  { text: "Geometry", level: 1, icon: "geometry", bold: true, check: false, color: "text-[#1766b8]" },
  { text: "Volume", level: 1, icon: "cube", box: "+", bold: true, check: true, color: "text-[#1fb51f]" },
  { text: "Datum Objects", level: 0, icon: "datum", bold: true, check: false },
  { text: "Meshers", level: 0, icon: "cubeTeal", bold: true },
  { text: "Workflows", level: 0, icon: "workflow", bold: true },
];

const indent = ["pl-[1px]", "pl-[10px]", "pl-[19px]", "pl-[28px]", "pl-[37px]"];

function TreeRow({ node }: { node: Node }) {
  return (
    <li
      className={`flex min-h-[14px] flex-1 items-center whitespace-nowrap ${indent[node.level]} ${
        node.selected ? "bg-[#bbdde4]" : ""
      } ${node.bold ? "font-bold" : ""} ${node.color ?? "text-[#111]"}`}
    >
      <svg viewBox="0 0 6 6" className="size-[6px] shrink-0" aria-hidden="true">
        {node.box && (
          <g fill="#e9f6f9" stroke="#7fc3d3" strokeWidth="1">
            <path d="M.5.5h5v5h-5z" />
            <path d={node.box === "+" ? "M1 3h4M3 1v4" : "M1 3h4"} stroke={TEAL} strokeWidth=".7" />
          </g>
        )}
      </svg>
      <Glyph name={node.icon} className="mx-[4px] size-[9px]" />
      {node.check === undefined ? (
        node.text
      ) : (
        <label className="flex items-center gap-[4px]">
          <span className="relative flex">
            <input
              type="checkbox"
              defaultChecked={node.check}
              className="peer size-[9px] appearance-none border border-[#8b8b8b] bg-white"
            />
            <svg viewBox="0 0 9 9" className="absolute hidden size-[9px] peer-checked:block" aria-hidden="true">
              <path d="M2 4.500l2 2L7.500 2" fill="none" stroke={TEAL} strokeWidth="1.300" />
            </svg>
          </span>
          {node.text}
        </label>
      )}
      {node.add && <PlusMark className="ml-[5px] text-[#22c322]" />}
    </li>
  );
}

function VScroll({ thumb }: { thumb: string }) {
  return (
    <div className="flex w-[8px] shrink-0 flex-col items-center justify-between bg-[#ececec] text-[#555]">
      <ChevronMini up />
      <span className={`w-[7px] bg-[#cdcdcd] ${thumb}`} />
      <ChevronMini />
    </div>
  );
}

function ChevronMini({ up }: { up?: boolean }) {
  return (
    <svg viewBox="0 0 8 8" className="size-[8px] shrink-0 bg-[#d6d6d6]" fill="none" stroke="#444" strokeWidth="1.200" aria-hidden="true">
      <path d={up ? "M2 5l2-2 2 2" : "M2 3l2 2 2-2"} />
    </svg>
  );
}

function LeftColumn() {
  return (
    <aside className="flex w-[169px] shrink-0 flex-col gap-[4px]">
      <section className="flex flex-[365] flex-col">
        <PanelHead>
          <PanelTab icon="tree" text="Elements" active />
        </PanelHead>
        <TreeTools full />
        <ul className="flex flex-1 flex-col border border-[#b5b5b5] bg-white pb-[3px]">
          {elements.map((n) => (
            <TreeRow key={n.text} node={n} />
          ))}
        </ul>
      </section>
      <section className="flex flex-[130] flex-col">
        <PanelHead>
          <PanelTab icon="tree" text="FAME Elements" active />
        </PanelHead>
        <TreeTools />
        <div className="flex flex-1 border border-[#b5b5b5] bg-white">
          <ul className="flex flex-1 flex-col">
            {fame.map((n) => (
              <TreeRow key={n.text} node={n} />
            ))}
          </ul>
          <VScroll thumb="my-[1px] flex-1" />
        </div>
      </section>
    </aside>
  );
}

/* ---------- properties ---------- */

const rows = [
  ["Liquid", "Compressible", "PACE_LiquidComposition_New1", "01_Liq"],
  ["Gas", "Compressible", "PACE_VaporComposition", "02_Vap"],
  ["Gas", "Compressible", "N2", "03_Air"],
];

const columns = ["Aggregate State", "Compressibility", "Material", "Phase Name"];

function Properties() {
  return (
    <main className="flex w-[352px] shrink-0 flex-col">
      <PanelHead>
        <PanelTab icon="props" text="Properties" active />
        <PanelTab icon="props" text="FAME Properties" />
      </PanelHead>
      <div className="flex-1 border-2 border-t border-[#3ba3bd] bg-white pt-[5px] pl-[6px]">
        <div className="flex items-start">
          <Glyph name="material" className="mt-[1px] size-[16px]" />
          <div className="ml-[2px]">
            <h2 className="text-[9px] leading-[12px] font-bold text-black">Material</h2>
            <p className="leading-[10px]">Material</p>
          </div>
          <div className="mr-[18px] ml-auto flex gap-[6px]">
            <button aria-label="Previous section" className="flex size-[14px] items-center justify-center bg-[#3b9cb6] text-white">
              <ChevronsUp size={9} strokeWidth={3} />
            </button>
            <button aria-label="Next section" className="flex size-[14px] items-center justify-center bg-[#3b9cb6] text-white">
              <ChevronsDown size={9} strokeWidth={3} />
            </button>
          </div>
        </div>
        <h3 className="mt-[5px] flex items-center gap-[2px] text-[8px] leading-[12px] font-bold text-black">
          <Caret />
          Material
        </h3>
        <div className="pt-[2px] pl-[9px]">
          <h4 className="leading-[11px] font-bold text-black">Material Composition</h4>
          <div className="flex h-[18px] items-center gap-[3px] pl-[3px]">
            <Glyph name="rowAdd" />
            <Glyph name="rowDel" />
            <Glyph name="copyOff" className="ml-[1px] size-[9px]" />
            <Glyph name="pasteOff" className="ml-[1px] size-[9px]" />
            <Glyph name="material" className="ml-[1px] size-[9px]" />
          </div>
          <div className="mr-[5px] bg-[#ececec]">
            <table className="w-full table-fixed border-collapse">
              <colgroup>
                <col className="w-[34px]" />
                <col className="w-[58px]" />
                <col className="w-[65px]" />
                <col className="w-[115px]" />
                <col />
              </colgroup>
              <thead>
                <tr className="h-[16px] bg-[#cbcbcb]">
                  <th className="border border-[#bdbdbd]" />
                  {columns.map((c) => (
                    <th key={c} className="border border-[#bdbdbd] p-0 font-normal whitespace-nowrap">
                      {c}
                    </th>
                  ))}
                </tr>
              </thead>
              <tbody>
                {rows.map((row, i) => (
                  <tr key={i} className={`h-[12px] ${i === 0 ? "bg-[#bbdde4] text-[#444]" : "bg-white"}`}>
                    <th
                      className={`p-0 font-normal ${
                        i === 0 ? "border border-[#3ba3bd] bg-[#c4c8c9]" : "border border-[#c8c8c8] bg-[#ececec]"
                      }`}
                    >
                      {i + 1}
                    </th>
                    {row.map((cell, j) => (
                      <td key={j} className="border border-[#c8c8c8] p-0">
                        {j < 3 ? (
                          <span className="relative flex items-center">
                            <select
                              aria-label={`${columns[j]} ${i + 1}`}
                              className="h-[11px] w-full appearance-none bg-transparent pl-[2px]"
                            >
                              <option>{cell}</option>
                            </select>
                            <Caret className="pointer-events-none absolute right-[3px] text-black" />
                          </span>
                        ) : (
                          <span className="pl-[3px]">{cell}</span>
                        )}
                      </td>
                    ))}
                  </tr>
                ))}
                {[0, 1, 2].map((i) => (
                  <tr key={i} className={i === 2 ? "h-[9px]" : "h-[12px]"}>
                    {[0, 1, 2, 3, 4].map((j) => (
                      <td key={j} className={`border border-[#c8c8c8] ${i === 2 ? "border-b-0" : ""}`} />
                    ))}
                  </tr>
                ))}
              </tbody>
            </table>
            <div className="flex h-[4px] items-center justify-center">
              <span className="h-[2px] w-[12px] bg-[#cdcdcd]" />
            </div>
          </div>
        </div>
      </div>
    </main>
  );
}

/* ---------- 3D view ---------- */

const rad = (deg: number) => (deg * Math.PI) / 180;

function bowlPoint(phi: number, theta: number) {
  const r = 169 * Math.cos(rad(phi));
  const x = 805 + r * Math.sin(rad(theta));
  const y = 317 + 169 * 0.977 * Math.sin(rad(phi)) + r * 0.213 * Math.cos(rad(theta));
  return `${x.toFixed(1)} ${y.toFixed(1)}`;
}

function bowlLines() {
  let d = "";
  for (let phi = 0; phi < 90; phi += 1.25) {
    for (let t = -90; t <= 90; t += 6) d += (t === -90 ? "M" : "L") + bowlPoint(phi, t);
  }
  for (let t = -90; t <= 90; t += 1.35) {
    for (let phi = 0; phi <= 90; phi += 6) d += (phi === 0 ? "M" : "L") + bowlPoint(phi, t);
  }
  return d;
}

function diskLines() {
  let d = "";
  for (let t = 0; t < 360; t += 2) {
    const c = Math.cos(rad(t));
    const s = Math.sin(rad(t));
    d += `M${(805 + 30 * c).toFixed(1)} ${(317 + 6 * s).toFixed(1)}L${(805 + 169 * c).toFixed(1)} ${(317 + 36 * s).toFixed(1)}`;
  }
  return d;
}

function barrelLines() {
  let d = "";
  for (let t = -90; t <= 90; t += 2.2) {
    const s = Math.sin(rad(t));
    const c = Math.cos(rad(t));
    const x = 803 + 69 * s;
    const foot = 803 + 58 * s;
    d += `M${x.toFixed(1)} ${(139 + 15 * c).toFixed(1)}L${x.toFixed(1)} ${(270 + 14 * c).toFixed(1)}L${foot.toFixed(1)} ${(288 + 13 * c).toFixed(1)}`;
  }
  for (let y = 141; y < 290; y += 2) d += `M734 ${y}Q803 ${y + 30} 872 ${y}`;
  return d;
}

const rings = [164, 156, 148, 139, 131, 123, 116, 109, 103, 97, 92, 87, 82, 78, 74, 70];
const bowl = "M636 317a169 169 0 0 0 338 0z";
const barrel =
  "M733.500 139V250Q734 262 736.500 272 740 285 757 293 775 301 804 301 833 301 851 293 868 285 871 272 872.500 260 872.500 250V139Z";

function Scene() {
  return (
    <svg viewBox="525 113 571 378" className="h-full w-full" role="img" aria-label="Spray chamber mesh">
      <defs>
        <linearGradient id="bowlSide">
          <stop offset="0" stopColor="#5a2727" />
          <stop offset=".12" stopColor="#a85050" />
          <stop offset=".35" stopColor="#f08080" />
          <stop offset=".48" stopColor="#ff9c9c" />
          <stop offset=".58" stopColor="#ffdede" />
          <stop offset=".63" stopColor="#ffd0d0" />
          <stop offset=".72" stopColor="#f58585" />
          <stop offset=".9" stopColor="#a85252" />
          <stop offset="1" stopColor="#5a2727" />
        </linearGradient>
        <linearGradient id="bowlDown" x2="0" y2="1">
          <stop offset=".3" stopColor="#c05858" stopOpacity="0" />
          <stop offset=".55" stopColor="#c05c5c" stopOpacity=".8" />
          <stop offset=".8" stopColor="#944444" />
          <stop offset="1" stopColor="#5a2828" />
        </linearGradient>
        <radialGradient id="bowlRim" gradientUnits="userSpaceOnUse" cx="805" cy="317" r="169">
          <stop offset=".88" stopOpacity="0" />
          <stop offset="1" stopOpacity=".9" />
        </radialGradient>
        <radialGradient id="diskFill">
          <stop offset=".3" stopColor="#1d0b0b" />
          <stop offset=".6" stopColor="#4a2020" />
          <stop offset="1" stopColor="#552626" />
        </radialGradient>
        <radialGradient id="diskCore">
          <stop offset=".68" />
          <stop offset="1" stopOpacity="0" />
        </radialGradient>
        <linearGradient id="barrelSide">
          <stop offset="0" stopColor="#0f4a0f" />
          <stop offset=".12" stopColor="#279a22" />
          <stop offset=".36" stopColor="#48dc40" />
          <stop offset=".5" stopColor="#a9e29a" />
          <stop offset=".6" stopColor="#a2e092" />
          <stop offset=".7" stopColor="#3ccf35" />
          <stop offset=".88" stopColor="#279522" />
          <stop offset="1" stopColor="#0a3a0a" />
        </linearGradient>
        <clipPath id="barrelClip">
          <path d={barrel} />
        </clipPath>
      </defs>

      <path d={bowl} fill="url(#bowlSide)" />
      <path d={bowl} fill="url(#bowlDown)" />
      <path d={bowlLines()} fill="none" stroke="#000" strokeWidth=".5" strokeOpacity=".75" />
      <path d={bowl} fill="url(#bowlRim)" />
      <path d="M636 317a169 169 0 0 0 338 0" fill="none" stroke="#000" strokeWidth="1.300" />
      <path
        d="M690 366l25 2M692 395l4 2M745 428l6-3M726 428l5 4M860 412l10 4M885 425l12-6M905 405l20-14M925 398l14-18M880 448l6-12M690 430l16 8M822 411l8 3"
        stroke="#5446b0"
        strokeDasharray="1 3"
        strokeWidth="1.200"
        fill="none"
      />
      <ellipse cx="805" cy="317" rx="169" ry="36.500" fill="url(#diskFill)" stroke="#0d0505" />
      <path d={diskLines()} stroke="#000" strokeWidth=".5" strokeOpacity=".7" />
      <g fill="none" stroke="#000" strokeWidth=".6">
        {rings.map((r) => (
          <ellipse key={r} cx="805" cy="317" rx={r} ry={r * 0.213} />
        ))}
      </g>
      <ellipse cx="805" cy="316" rx="100" ry="20" fill="url(#diskCore)" />
      <path d="M771 314l6-4M834 310l5 3" stroke="#7d3434" strokeWidth="2.500" />
      <path d="M783 317h8M797 316l6 2M811 318h7M823 316l8 2" stroke="#5d6b24" strokeWidth="3.500" strokeDasharray="1 1.500" />

      <path d={barrel} fill="url(#barrelSide)" />
      <g clipPath="url(#barrelClip)">
        <path d="M807 203Q835 225 840 255L838 295H780L776 255Q785 225 807 203z" fill="#2cab26" fillOpacity=".75" />
        <path d="M776 254Q796 242 815 250L817 292H777z" fill="#cfe3c8" fillOpacity=".8" />
        <path d="M833 240L840 255 837 285" stroke="#d9efd2" strokeWidth="3" strokeOpacity=".6" fill="none" />
        <path d="M733 194L751 238 757 300H733z" fill="#0c3a0b" fillOpacity=".6" />
        <path d="M873 194L861 238 856 300H873z" fill="#0c3a0b" fillOpacity=".6" />
        <path d={barrelLines()} fill="none" stroke="#001500" strokeWidth=".5" strokeOpacity=".7" />
        <path d="M735 190Q752 225 755 248V300M872 190Q859 228 857 248V300" stroke="#000" strokeWidth="1.500" fill="none" />
        <path d="M750 238V290M861 238V290" stroke="#000" strokeOpacity=".8" strokeWidth="3" />
        <path d="M807 204Q815 210 820 222M777 247L786 230M808 248l7 4" stroke="#8db51e" fill="none" />
        <path d="M736 276Q742 292 770 298T838 298 871 276V305H736z" fill="#000" fillOpacity=".35" />
      </g>
      <path d={barrel} fill="none" stroke="#000" strokeWidth="1.300" />
      <path d="M765 297Q804 307 843 297" stroke="#000" strokeWidth="3" fill="none" />
      <ellipse cx="803" cy="139.500" rx="69.500" ry="15.300" fill="#020502" />
      <ellipse cx="803" cy="137" rx="66" ry="12" fill="none" stroke="#173a17" strokeWidth=".6" />
      <ellipse cx="803" cy="139.500" rx="32" ry="8" fill="url(#barrelSide)" />
      <path
        d="M773 136q30-8 60 0M772 139q31-6 62 0M773 143q30-6 59 0M777 134v10M782 133v12M787 132v14M791 132v14M795 132v14M799 132v14M803 132v14M807 132v14M811 132v14M815 132v14M819 132v14M823 132v13M828 134v10"
        stroke="#021002"
        strokeWidth=".8"
        fill="none"
      />
      <path d="M771 140a32 8 0 0 0 14 6V133a32 8 0 0 0-14 7zM835 140a32 8 0 0 1-14 6V133a32 8 0 0 1 14 7z" fillOpacity=".35" />

      <path d="M575 442V421A21 21 0 0 1 596 442z" fill="#b9b9b9" />
      <path d="M575 442l6-3" stroke="#b01818" strokeWidth="3" />
      <path d="M578 440q1-4 7-5 1 4-4 6z" fill="#8c3b3b" />
      <path d="M575 442V420" stroke="#15901a" strokeWidth="2" />
      <path d="M572.500 422L575.500 410 578 422z" fill="#17a51c" />
      <path d="M575 442.500L597 443.500" stroke="#1717b0" strokeWidth="2.200" />
      <path d="M594 440.500L608 443.800 594 446z" fill="#1a1ac4" />
      <g className="font-['Liberation_Sans',sans-serif] text-[9px]">
        <text x="572" y="405" fill="#2fe02f">Y</text>
        <text x="583" y="434" fill="#c94040">X</text>
        <text x="610" y="445" fill="#2f2fe0">Z</text>
      </g>
    </svg>
  );
}

function Tool({ icon, off }: { icon: ReactNode; off?: boolean }) {
  return (
    <button className="flex items-center gap-[2px] text-[#2d9ab5]" aria-label="View tool">
      {icon}
      <Caret className={off ? "text-[#c5c5c5]" : "text-[#555]"} />
    </button>
  );
}

function Viewer() {
  return (
    <section className="flex min-h-0 flex-[410] flex-col bg-white">
      <PanelHead>
        <PanelTab icon="viewer" text="3D Viewer" active />
      </PanelHead>
      <div className="flex h-[16px] shrink-0 items-center gap-[4px] pl-[4px]">
        <Glyph name="select" />
        <Tool icon={<SlidersVertical size={10} strokeWidth={3} />} />
        <Tool icon={<Menu size={11} strokeWidth={4} className="text-[#444]" />} />
        <span className="mx-[4px] h-[10px] w-[1px] bg-[#ddd]" />
        <Tool icon={<Search size={9} strokeWidth={4} />} />
        <Tool icon={<Glyph name="solid" />} />
        <Tool icon={<Glyph name="rotate" />} />
        <Tool icon={<Glyph name="pan" />} />
        <Tool icon={<Glyph name="stackOff" />} off />
        <span className="h-[10px] w-[1px] bg-[#ddd]" />
        <span className="relative flex items-center">
          <select
            aria-label="Bookmark"
            className="h-[14px] w-[83px] appearance-none border border-[#ddd] bg-white pl-[2px] text-[7px]"
          >
            <option>No Bookmark</option>
          </select>
          <span className="pointer-events-none absolute right-0 flex h-[14px] w-[13px] items-center justify-center bg-[#d9d9d9]">
            <Caret className="text-[#777]" />
          </span>
        </span>
        <Camera size={10} strokeWidth={3} className="text-[#444]" />
        <Camera size={10} strokeWidth={3} className="text-[#ccc]" />
        <Glyph name="sideList" />
      </div>
      <div className="ml-[1px] min-h-0 flex-1 bg-[#e9e9e9]">
        <Scene />
      </div>
    </section>
  );
}

/* ---------- messages ---------- */

const messages = ["", "2022-10-05 18:47:12", "2022-10-05 18:47:14"];
const note = "Due to change of compressibility treatment revise settings for Additional Terms/Body Force.";

function MessageCols() {
  return (
    <colgroup>
      <col className="w-[16px]" />
      <col className="w-[73px]" />
      <col />
    </colgroup>
  );
}

function Messages() {
  return (
    <section className="flex min-h-0 flex-[87] flex-col bg-white">
      <PanelHead>
        <PanelTab icon="doc" text="Messages" active />
        <PanelTab icon="shield" text="Data Checks" />
      </PanelHead>
      <div className="flex h-[16px] shrink-0 items-center gap-[5px] pr-[3px] pl-[3px]">
        <Glyph name="save" className="size-[9px]" />
        <Glyph name="copy" className="size-[9px]" />
        <Glyph name="log" className="size-[9px]" />
        <label className="flex h-[14px] flex-1 items-center gap-[4px] border border-[#eee] pl-[3px]">
          <Search size={9} strokeWidth={4} className="text-[#2d9ab5]" />
          <input
            aria-label="Search messages"
            placeholder="Search messages..."
            className="flex-1 text-[7px] italic outline-none placeholder:text-[#999]"
          />
        </label>
      </div>
      <div className="flex min-h-0 flex-1">
        <div className="flex min-w-0 flex-1 flex-col">
          <table className="ml-[1px] table-fixed border-collapse">
            <MessageCols />
            <thead>
              <tr className="h-[15px] border-y border-[#c4c4c4] bg-[#efefef] text-left">
                <th className="border-r border-[#c4c4c4]" />
                <th className="border-r border-[#c4c4c4] p-0 pl-[3px] font-normal">Time</th>
                <th className="p-0 pl-[3px] font-normal">Message</th>
              </tr>
            </thead>
          </table>
          <div className="flex min-h-0 flex-1 flex-col justify-end overflow-hidden">
            <table className="ml-[1px] table-fixed border-collapse">
              <MessageCols />
              <tbody>
                {messages.map((time, i) => (
                  <tr key={i} className={`h-[13px] ${i % 2 ? "" : "bg-[#efefef]"}`}>
                    <td className="p-0 pl-[3px]">{time && <Glyph name="warn" />}</td>
                    <td className="p-0 pl-[4px] whitespace-nowrap">{time}</td>
                    <td className="p-0 pl-[3px] whitespace-nowrap">{note}</td>
                  </tr>
                ))}
              </tbody>
            </table>
          </div>
          <div className="flex h-[10px] shrink-0 items-center bg-[#e6e8e9]">
            <ChevronSide left />
            <span className="ml-[1px] h-[7px] w-[57%] bg-[#cdcdcd]" />
            <span className="ml-auto">
              <ChevronSide />
            </span>
          </div>
        </div>
        <div className="mb-[10px] flex">
          <VScroll thumb="mb-[3px] h-[24px]" />
        </div>
      </div>
    </section>
  );
}

function ChevronSide({ left }: { left?: boolean }) {
  return (
    <svg viewBox="0 0 8 8" className="size-[8px] bg-[#d6d6d6]" fill="none" stroke="#444" strokeWidth="1.200" aria-hidden="true">
      <path d={left ? "M5 2L3 4l2 2" : "M3 2l2 2-2 2"} />
    </svg>
  );
}

export default function App() {
  return (
    <div className="flex h-screen flex-col overflow-hidden bg-[#cecece] font-['Open_Sans','Noto_Sans',sans-serif] text-[7px] leading-[10px] text-[#222]">
      <TitleBar />
      <TabBar />
      <Ribbon />
      <div className="flex min-h-0 flex-1 pt-[2px] pb-[2px]">
        <LeftColumn />
        <div className="w-[3px] shrink-0" />
        <Properties />
        <div className="flex min-w-0 flex-1 flex-col gap-[4px] pl-[1px]">
          <Viewer />
          <Messages />
        </div>
      </div>
    </div>
  );
}
